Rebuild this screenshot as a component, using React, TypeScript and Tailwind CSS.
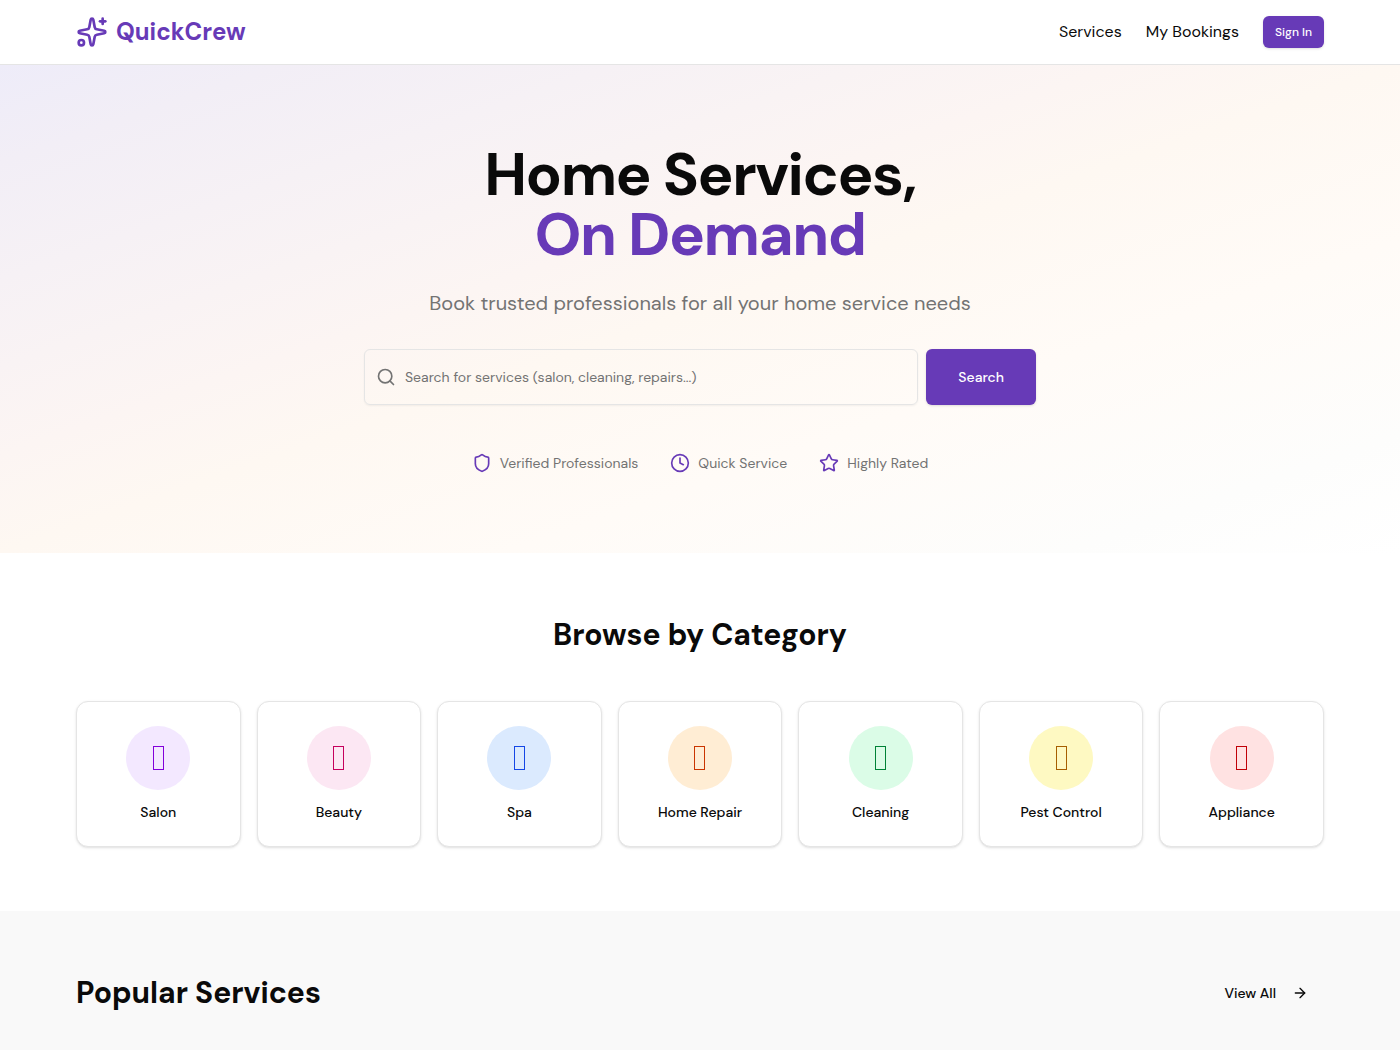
import { useState } from 'react'
import { ArrowRight, Clock, Search, Shield, Sparkles, Star } from 'lucide-react'

const categories = [
  { name: 'Salon', color: 'bg-purple-100 text-purple-700' },
  { name: 'Beauty', color: 'bg-pink-100 text-pink-700' },
  { name: 'Spa', color: 'bg-blue-100 text-blue-700' },
  { name: 'Home Repair', color: 'bg-orange-100 text-orange-700' },
  { name: 'Cleaning', color: 'bg-green-100 text-green-700' },
  { name: 'Pest Control', color: 'bg-yellow-100 text-yellow-700' },
  { name: 'Appliance', color: 'bg-red-100 text-red-700' },
]

const features = [
  { label: 'Verified Professionals', icon: Shield },
  { label: 'Quick Service', icon: Clock },
  { label: 'Highly Rated', icon: Star },
]

function Header() {
  return (
    <header className="border-b border-neutral-200 bg-white">
      <div className="mx-auto flex h-16 max-w-7xl items-center justify-between px-4">
        <a href="#" className="flex items-center gap-2 text-[#673ab7]">
          <Sparkles className="size-8" />
          <span className="text-2xl font-bold">QuickCrew</span>
        </a>
        <nav className="flex items-center gap-6">
          <a href="#services">Services</a>
          <a href="#bookings">My Bookings</a>
          <button type="button" className="h-8 rounded-md bg-[#673ab7] px-3 text-xs font-medium text-white shadow-sm">
            Sign In
          </button>
        </nav>
      </div>
    </header>
  )
}

function Hero() {
  const [query, setQuery] = useState('')

  return (
    <section className="bg-[linear-gradient(to_bottom_right,#eeecf9_0%,#f2eef6_10%,#f6f1f5_22%,#fcf5f3_40%,#fef8f2_50%,#fffbf7_68%,#fdfdfc_88%,#ffffff_100%)] px-4 py-20">
      <div className="mx-auto max-w-4xl text-center">
        <h1 className="text-6xl leading-none font-bold tracking-tight">
          Home Services,
          <span className="block text-[#673ab7]">On Demand</span>
        </h1>
        <p className="mt-6 text-xl text-neutral-500">Book trusted professionals for all your home service needs</p>
        <form className="mx-auto mt-8 flex max-w-2xl gap-2" onSubmit={(e) => e.preventDefault()}>
          <div className="relative flex-1">
            <Search className="absolute top-1/2 left-3 size-5 -translate-y-1/2 text-neutral-500" />
            <input
              type="search"
              aria-label="Search for services"
              placeholder="Search for services (salon, cleaning, repairs...)"
              value={query}
              onChange={(e) => setQuery(e.target.value)}
              className="h-14 w-full rounded-md border border-neutral-200 bg-transparent pr-3 pl-10 text-sm shadow-xs placeholder:text-neutral-500"
            />
          </div>
          <button type="submit" className="h-14 rounded-md bg-[#673ab7] px-8 text-sm font-medium text-white shadow-sm">
            Search
          </button>
        </form>
        <ul className="mt-12 flex flex-wrap justify-center gap-8 text-sm text-neutral-500">
          {features.map(({ label, icon: Icon }) => (
            <li key={label} className="flex items-center gap-2">
              <Icon className="size-5 text-[#673ab7]" />
              {label}
            </li>
          ))}
        </ul>
      </div>
    </section>
  )
}

function Categories() {
  return (
    <section className="mx-auto max-w-7xl px-4 py-16">
      <h2 className="mb-12 text-center text-3xl font-bold">Browse by Category</h2>
      <div className="grid grid-cols-2 gap-4 md:grid-cols-4 lg:grid-cols-7">
        {categories.map((category) => (
          <a
            key={category.name}
            href="#services"
            className="flex flex-col items-center gap-3 rounded-xl border border-neutral-200 bg-white p-6 shadow-sm"
          >
            <span className={`flex size-16 items-center justify-center rounded-full ${category.color}`}>
              <span className="h-6 w-[11px] border border-current" />
            </span>
            <span className="text-sm font-medium whitespace-nowrap">{category.name}</span>
          </a>
        ))}
      </div>
    </section>
  )
}

function PopularServices() {
  return (
    <section className="bg-[#f9f9f9] py-16">
      <div className="mx-auto flex max-w-7xl items-center justify-between px-4">
        <h2 className="text-3xl font-bold">Popular Services</h2>
        <a href="#services" className="flex items-center gap-4 px-4 text-sm font-medium">
          View All
          <ArrowRight className="size-4" />
        </a>
      </div>
    </section>
  )
}

export default function App() {
  return (
    <div className="min-h-screen bg-white font-['DM_Sans',Inter,sans-serif] text-neutral-950">
      <Header />
      <main>
        <Hero />
        <Categories />
        <PopularServices />
      </main>
    </div>
  )
}
